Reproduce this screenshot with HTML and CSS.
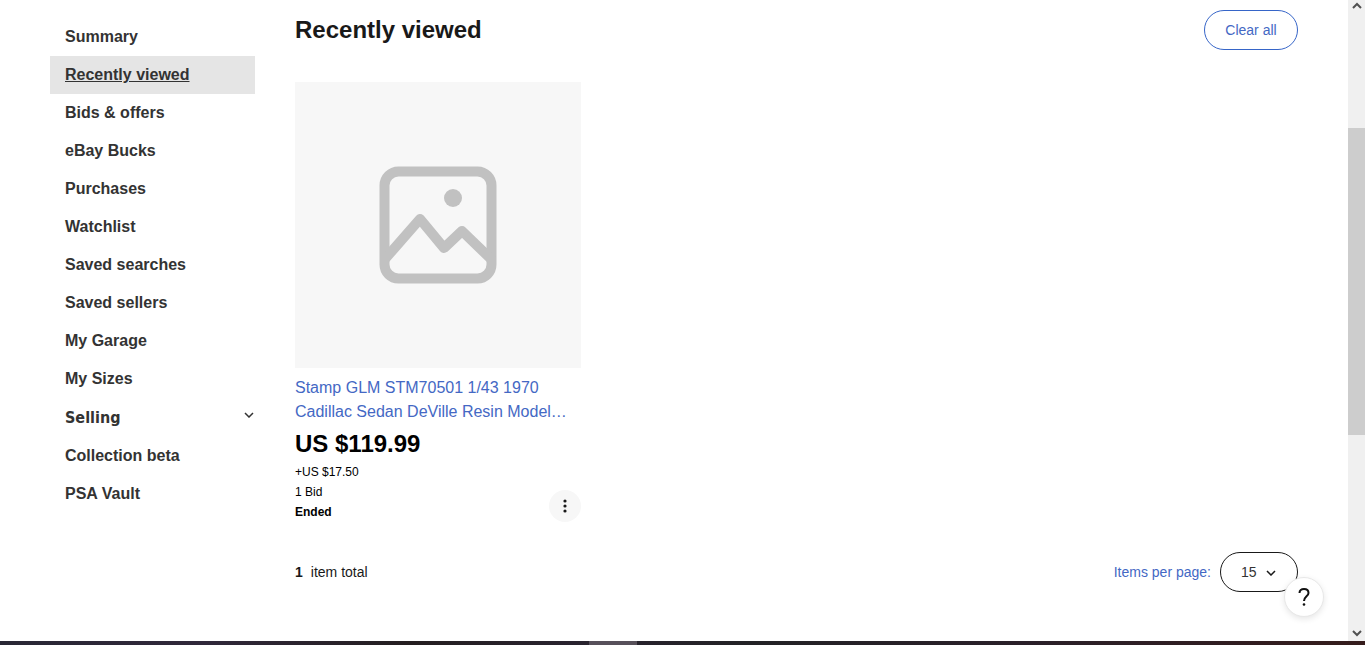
FILE: index.html
```html
<!DOCTYPE html>
<html lang="en">
<head>
    <meta charset="UTF-8">
    <meta name="viewport" content="width=device-width, initial-scale=1.0">
    <title>Recently viewed</title>
    <link rel="stylesheet" href="styles.css">
</head>
<body>
    <div class="window">
        <div class="page">
            <nav class="side-nav" aria-label="My eBay">
                <ul>
                    <li><a href="#">Summary</a></li>
                    <li><a href="#" class="active" aria-current="page">Recently viewed</a></li>
                    <li><a href="#">Bids &amp; offers</a></li>
                    <li><a href="#">eBay Bucks</a></li>
                    <li><a href="#">Purchases</a></li>
                    <li><a href="#">Watchlist</a></li>
                    <li><a href="#">Saved searches</a></li>
                    <li><a href="#">Saved sellers</a></li>
                    <li><a href="#">My Garage</a></li>
                    <li><a href="#">My Sizes</a></li>
                    <li>
                        <button type="button" class="nav-toggle" aria-expanded="false">
                            <span>Selling</span>
                            <svg class="chevron" viewBox="0 0 10 6" aria-hidden="true"><path d="M1 1l4 4 4-4"/></svg>
                        </button>
                    </li>
                    <li><a href="#">Collection beta</a></li>
                    <li><a href="#">PSA Vault</a></li>
                </ul>
            </nav>

            <main>
                <header class="page-header">
                    <h1>Recently viewed</h1>
                    <button type="button" class="clear-btn">Clear all</button>
                </header>

                <article class="item-card">
                    <div class="item-image">
                        <svg viewBox="0 0 118 118" role="img" aria-label="No image">
                            <rect x="5.500" y="5.500" width="107" height="107" rx="14"/>
                            <path d="M6 93L41 53l24 29 18-17 30 29"/>
                            <circle cx="74" cy="32" r="9"/>
                        </svg>
                    </div>
                    <a href="#" class="item-title">Stamp GLM STM70501 1/43 1970 Cadillac Sedan DeVille Resin Model…</a>
                    <div class="item-price">US $119.99</div>
                    <div class="item-bottom">
                        <div class="item-details">
                            <div>+US $17.50</div>
                            <div>1 Bid</div>
                            <div class="ended">Ended</div>
                        </div>
                        <button type="button" class="menu-btn" aria-label="More options">
                            <svg viewBox="0 0 4 14" aria-hidden="true"><circle cx="2" cy="2" r="1.600"/><circle cx="2" cy="7" r="1.600"/><circle cx="2" cy="12" r="1.600"/></svg>
                        </button>
                    </div>
                </article>

                <footer class="page-footer">
                    <div class="total"><b>1</b><span>item total</span></div>
                    <div class="per-page">
                        <label for="per-page">Items per page:</label>
                        <div class="select-wrap">
                            <select id="per-page">
                                <option>15</option>
                                <option>30</option>
                                <option>60</option>
                            </select>
                            <svg class="chevron" viewBox="0 0 10 6" aria-hidden="true"><path d="M1 1l4 4 4-4"/></svg>
                        </div>
                    </div>
                </footer>
            </main>

            <button type="button" class="help-btn" aria-label="Help">
                <svg viewBox="0 0 12 20" aria-hidden="true"><path d="M1.500 6C1.500 3.200 3.300 2 6 2s4.500 1.400 4.500 3.900C10.500 9.200 6 9.500 6 14"/><circle cx="6" cy="17.500" r="1.300"/></svg>
            </button>
        </div>

        <div class="scrollbar" aria-hidden="true">
            <svg viewBox="0 0 10 7"><path d="M1 6l4-4 4 4"/></svg>
            <div class="track"><div class="thumb"></div></div>
            <svg viewBox="0 0 10 7"><path d="M1 1l4 4 4-4"/></svg>
        </div>
    </div>
    <div class="taskbar"><div class="task"></div></div>
</body>
</html>
```

FILE: styles.css
```css
* {
    box-sizing: border-box;
}
body {
    margin: 0;
    height: 100vh;
    display: flex;
    flex-direction: column;
    overflow: hidden;
    font-family: "Liberation Sans", Arial, sans-serif;
    font-size: 14px;
    color: #191919;
    background: #fff;
}
button, select {
    font-family: inherit;
    cursor: pointer;
}
a {
    text-decoration: none;
}

/* Window */
.window {
    flex: 1;
    min-height: 0;
    display: flex;
}
.page {
    position: relative;
    flex: 1;
    display: flex;
    gap: 40px;
    padding: 0 50px;
}

/* Side navigation */
.side-nav {
    flex: 0 0 205px;
    padding-top: 18px;
}
.side-nav ul {
    list-style: none;
    margin: 0;
    padding: 0;
}
.side-nav a {
    display: block;
    padding: 0 15px;
    line-height: 38px;
    font-size: 16px;
    font-weight: bold;
    color: #333;
}
.side-nav a.active {
    background: #e5e5e5;
    text-decoration: underline;
}
.nav-toggle {
    display: flex;
    justify-content: space-between;
    align-items: center;
    width: 100%;
    height: 39px;
    padding: 0 1px 0 15px;
    border: 0;
    background: none;
    font-family: "DejaVu Sans Condensed", "Noto Sans", sans-serif;
    font-size: 16px;
    font-weight: bold;
    color: #333;
}
.chevron {
    width: 10px;
    height: 6px;
    fill: none;
    stroke: #333;
    stroke-width: 1.5;
}
.nav-toggle .chevron {
    margin-bottom: 6px;
}

/* Content */
main {
    flex: 1;
    padding-top: 10px;
}
.page-header {
    display: flex;
    justify-content: space-between;
    align-items: center;
    margin-bottom: 32px;
}
h1 {
    margin: 0;
    font-size: 24px;
}
.clear-btn {
    min-width: 94px;
    height: 40px;
    padding: 0 20px;
    border: 1px solid #3665c8;
    border-radius: 20px;
    background: #fff;
    color: #4468c4;
    font-size: 14px;
}

/* Item */
.item-card {
    width: 286px;
}
.item-image {
    display: flex;
    align-items: center;
    justify-content: center;
    aspect-ratio: 1;
    margin-bottom: 8px;
    background: #f7f7f7;
}
.item-image svg {
    width: 118px;
    height: 118px;
    fill: none;
    stroke: #c1c1c1;
    stroke-width: 10;
    stroke-linejoin: round;
}
.item-image circle {
    fill: #c1c1c1;
    stroke: none;
}
.item-title {
    display: block;
    font-size: 16px;
    line-height: 24px;
    color: #4468c4;
}
.item-price {
    padding-top: 2px;
    font-size: 24px;
    line-height: 36px;
    font-weight: bold;
    color: #000;
}
.item-bottom {
    display: flex;
    justify-content: space-between;
    align-items: flex-end;
    font-size: 12px;
    line-height: 20px;
    color: #000;
}
.ended {
    font-weight: bold;
}
.menu-btn {
    display: flex;
    align-items: center;
    justify-content: center;
    width: 32px;
    height: 32px;
    padding: 0;
    border: 0;
    border-radius: 50%;
    background: #f7f7f7;
}
.menu-btn svg {
    width: 4px;
    height: 14px;
    fill: #191919;
}

/* Footer */
.page-footer {
    display: flex;
    justify-content: space-between;
    align-items: center;
    margin-top: 30px;
}
.total {
    display: flex;
    gap: 8px;
}
.per-page {
    display: flex;
    align-items: center;
    gap: 9px;
    color: #4468c4;
}
.select-wrap {
    position: relative;
}
.select-wrap select {
    appearance: none;
    width: 78px;
    height: 40px;
    padding: 0 20px;
    border: 1px solid #191919;
    border-radius: 20px;
    background: #fff;
    color: #333;
    font-size: 14px;
}
.select-wrap .chevron {
    position: absolute;
    right: 22px;
    top: 18px;
    stroke: #191919;
    pointer-events: none;
}
.help-btn {
    position: absolute;
    right: 24px;
    bottom: 24px;
    display: flex;
    align-items: center;
    justify-content: center;
    width: 40px;
    height: 40px;
    padding: 0;
    border: 1px solid #e8e8e8;
    border-radius: 50%;
    background: #fff;
    box-shadow: 0 2px 6px rgba(0, 0, 0, 0.1);
}
.help-btn svg {
    width: 12px;
    height: 20px;
    fill: none;
    stroke: #111;
    stroke-width: 2;
}
.help-btn circle {
    fill: #111;
    stroke: none;
}

/* Scrollbar */
.scrollbar {
    flex: 0 0 17px;
    display: flex;
    flex-direction: column;
    align-items: center;
    padding: 2px 0 4px;
    background: #f0f0f0;
}
.scrollbar svg {
    width: 10px;
    height: 7px;
    fill: none;
    stroke: #505050;
    stroke-width: 2;
}
.track {
    flex: 1;
    width: 100%;
}
.thumb {
    height: calc(50% - 4px);
    margin-top: 119px;
    background: #cdcdcd;
}

/* Taskbar */
.taskbar {
    flex: 0 0 4px;
    display: flex;
    justify-content: center;
    background: linear-gradient(to right, #292735, #30283a 15%, #241e20 30%, #29232f 42%, #232226 55%, #2a2029 75%, #351c1c);
}
.task {
    width: 48px;
    margin-right: 139px;
    background: #57505a;
}
```
